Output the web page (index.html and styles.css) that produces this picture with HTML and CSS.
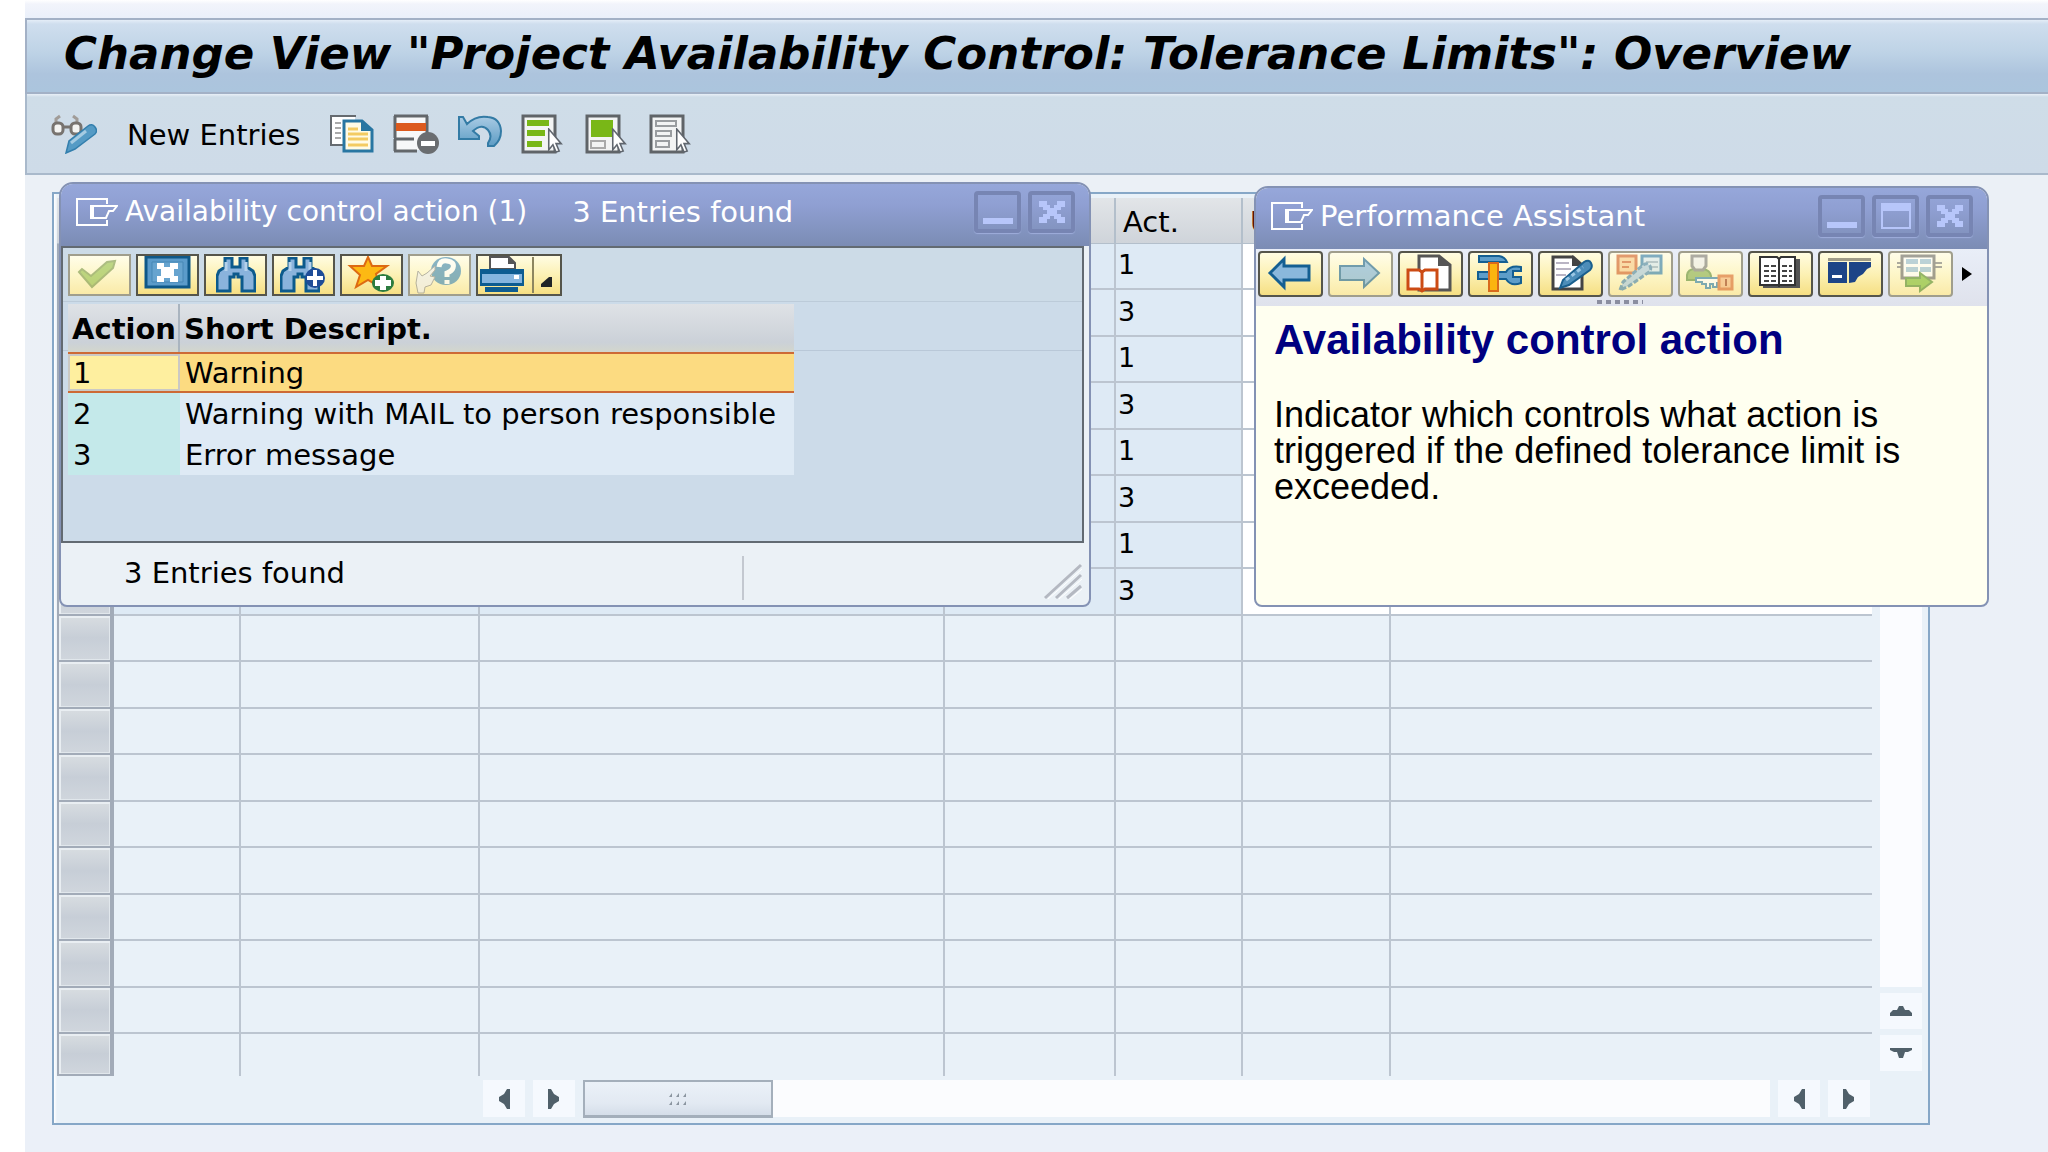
FILE: index.html
```html
<!DOCTYPE html>
<html lang="en">
<head>
<meta charset="utf-8">
<title>Change View: Overview</title>
<link rel="stylesheet" href="styles.css">
</head>
<body>
<svg class="defs" aria-hidden="true">
  <defs>
    <linearGradient id="steel" x1="0" y1="0" x2="0" y2="1"><stop offset="0" stop-color="#a9cbe4"/><stop offset="1" stop-color="#5d9cc4"/></linearGradient>
    <symbol id="menu" viewBox="0 0 42 28"><path d="M31 6V1H1v26h30v-5" fill="none" stroke="#fff" stroke-width="2"/><path d="M15 8h26l-4 5h-4l-3 7H15z" fill="none" stroke="#fff" stroke-width="2"/><path d="M14 7h4v14h-4z" fill="#fff"/></symbol>
    <symbol id="close" viewBox="0 0 28 22"><path d="M1 0h8v4h3v3h4V4h3V0h8v6h-4v3h-4v4h4v3h4v6h-8v-4h-3v-3h-4v3H9v4H1v-6h4v-3h4V9H5V6H1z" fill="#b7c6fa"/></symbol>
    <symbol id="binoculars" viewBox="0 0 40 36"><path d="M9 1h7v9h8V1h7v9l6 4 2 5v15H26V20h-4v-3h-4v3h-4v14H1V19l2-5 6-4z" fill="#8ab3dc" stroke="#0c5a8c" stroke-width="3"/><path d="M10 5v9M30 5v9" stroke="#b5d1ec" stroke-width="3"/></symbol>
    <symbol id="cursor" viewBox="0 0 14 24"><path d="M1 1v20l4-5 3 7 3-1-3-7h5z" fill="#fff" stroke="#60666e" stroke-width="1.5"/></symbol>
  </defs>
</svg>
<div class="page">
  <header class="titlebar"><h1>Change View "Project Availability Control: Tolerance Limits": Overview</h1></header>
  <div class="toolbar">
    <button class="tool tool-first" aria-label="Display / Change"><svg width="46" height="40" viewBox="0 0 46 40"><g fill="#f4f4f2" stroke="#77736f" stroke-width="3"><path d="M5 9V5l4-3M26 9V5l-4-3" fill="none" stroke="#a19c98"/><rect x="2" y="9" width="10" height="11" rx="4"/><rect x="20" y="9" width="10" height="11" rx="4"/><path d="M12 13h8"/></g><path d="M15 39l3-12L37 12q4-3 7 1t0 7L24 35z" fill="#559bc5" stroke="#337fad" stroke-width="1.5"/><path d="M20 29l15-12" stroke="#a5cbe2" stroke-width="3"/></svg></button>
    <button class="text-button">New Entries</button>
    <button class="tool" aria-label="Copy As"><svg width="46" height="40" viewBox="0 0 46 40"><path d="M2 32V2h25M2 31h12" fill="none" stroke="#666b70" stroke-width="2"/><path d="M3 3h23v4H14v23H3z" fill="#fff"/><path d="M6 9h6m-6 5h6m-6 5h6m-6 5h6" stroke="#aaa" stroke-width="2"/><path d="M15 7h18l10 9v21H15z" fill="#fffbe6" stroke="#2876a2" stroke-width="3"/><path d="M32 6v11h12z" fill="#2876a2"/><path d="M19 15h10M19 20h20M19 25h20M19 31h20" stroke="#f3cb62" stroke-width="3"/></svg></button>
    <button class="tool" aria-label="Delete"><svg width="46" height="40" viewBox="0 0 46 40"><path d="M2 2h32v34H2z" fill="#f7f8f9"/><path d="M1 2h34M2 2v22M34 2v22M1 25h20M2 25v12M1 37h23" stroke="#63676b" stroke-width="3" fill="none"/><path d="M3 9h30v8H3z" fill="#dc5a1e"/><circle cx="35" cy="29" r="11" fill="#6a6d70"/><path d="M28 27h14v5H28z" fill="#fff"/></svg></button>
    <button class="tool" aria-label="Undo"><svg width="46" height="40" viewBox="0 0 46 40"><path d="M2 3v22h20v-3l-6-5q9-8 15-1 5 6 0 13v3h6q7-6 7-15Q43 4 31 3 19 1 10 10L6 3z" fill="url(#steel)" stroke="#337ba5" stroke-width="2"/></svg></button>
    <button class="tool" aria-label="Select All"><svg width="46" height="40" viewBox="0 0 46 40"><path d="M2 2h32v36H2z" fill="#f3f4f4" stroke="#606468" stroke-width="3"/><path d="M6 6h22v6H6zM6 16h18v6H6zM6 27h15v6H6z" fill="#79b717"/><use href="#cursor" x="24" y="14" width="20" height="25"/></svg></button>
    <button class="tool" aria-label="Select Block"><svg width="46" height="40" viewBox="0 0 46 40"><path d="M2 2h32v36H2z" fill="#f3f4f4" stroke="#606468" stroke-width="3"/><path d="M6 6h22v17H6z" fill="#79b717"/><path d="M6 27h14v7H6z" fill="none" stroke="#aaa" stroke-width="2"/><use href="#cursor" x="24" y="14" width="20" height="25"/></svg></button>
    <button class="tool" aria-label="Deselect All"><svg width="46" height="40" viewBox="0 0 46 40"><path d="M2 2h32v36H2z" fill="#f3f4f4" stroke="#606468" stroke-width="3"/><path d="M7 7h20v5H7zM7 17h15v5H7zM7 27h13v6H7z" fill="none" stroke="#9a9da0" stroke-width="2"/><use href="#cursor" x="24" y="14" width="20" height="25"/></svg></button>
  </div>

  <main class="workarea">
    <section class="panel">
      <div class="table-row">
        <table class="grid">
          <colgroup><col class="c-sel"><col class="c-1"><col class="c-2"><col class="c-3"><col class="c-4"><col class="c-5"><col class="c-6"><col></colgroup>
          <thead><tr><th></th><th></th><th></th><th></th><th></th><th>Act.</th><th class="usage">U</th><th></th></tr></thead>
          <tbody>
            <tr class="filled"><td></td><td></td><td></td><td></td><td></td><td>1</td><td></td><td></td></tr>
            <tr class="filled"><td></td><td></td><td></td><td></td><td></td><td>3</td><td></td><td></td></tr>
            <tr class="filled"><td></td><td></td><td></td><td></td><td></td><td>1</td><td></td><td></td></tr>
            <tr class="filled"><td></td><td></td><td></td><td></td><td></td><td>3</td><td></td><td></td></tr>
            <tr class="filled"><td></td><td></td><td></td><td></td><td></td><td>1</td><td></td><td></td></tr>
            <tr class="filled"><td></td><td></td><td></td><td></td><td></td><td>3</td><td></td><td></td></tr>
            <tr class="filled"><td></td><td></td><td></td><td></td><td></td><td>1</td><td></td><td></td></tr>
            <tr class="filled"><td></td><td></td><td></td><td></td><td></td><td>3</td><td></td><td></td></tr>
            <tr><td></td><td></td><td></td><td></td><td></td><td></td><td></td><td></td></tr>
            <tr><td></td><td></td><td></td><td></td><td></td><td></td><td></td><td></td></tr>
            <tr><td></td><td></td><td></td><td></td><td></td><td></td><td></td><td></td></tr>
            <tr><td></td><td></td><td></td><td></td><td></td><td></td><td></td><td></td></tr>
            <tr><td></td><td></td><td></td><td></td><td></td><td></td><td></td><td></td></tr>
            <tr><td></td><td></td><td></td><td></td><td></td><td></td><td></td><td></td></tr>
            <tr><td></td><td></td><td></td><td></td><td></td><td></td><td></td><td></td></tr>
            <tr><td></td><td></td><td></td><td></td><td></td><td></td><td></td><td></td></tr>
            <tr><td></td><td></td><td></td><td></td><td></td><td></td><td></td><td></td></tr>
            <tr class="last"><td></td><td></td><td></td><td></td><td></td><td></td><td></td><td></td></tr>
          </tbody>
        </table>
        <div class="vscroll">
          <div class="track"></div>
          <button aria-label="Scroll up"><svg width="24" height="12" viewBox="0 0 24 12"><path d="M1 11V8l3-3h4l2-4h4l2 4h4l3 3v3z" fill="#50606a"/></svg></button>
          <button aria-label="Scroll down"><svg width="24" height="12" viewBox="0 0 24 12"><path d="M1 1h22v2l-4 2h-3l-2 6h-4L8 5H5L1 3z" fill="#50606a"/></svg></button>
        </div>
      </div>
      <div class="hscroll">
        <button aria-label="Scroll left"><svg width="12" height="20" viewBox="0 0 12 20"><path d="M12 0v20h-3l-3-5-5-3V8l5-3 3-5z" fill="#50606a"/></svg></button>
        <button aria-label="Scroll right"><svg width="12" height="20" viewBox="0 0 12 20"><path d="M0 0v20h3l3-5 5-3V8L6 5 3 0z" fill="#50606a"/></svg></button>
        <div class="track"><div class="thumb"><svg width="20" height="14" viewBox="0 0 20 14"><path d="M1 5l3-4v4zM8 5l3-4v4zM15 5l3-4v4zM1 13l3-4v4zM8 13l3-4v4zM15 13l3-4v4z" fill="#8b95a0"/></svg></div></div>
        <button aria-label="Page left"><svg width="12" height="20" viewBox="0 0 12 20"><path d="M12 0v20h-3l-3-5-5-3V8l5-3 3-5z" fill="#50606a"/></svg></button>
        <button aria-label="Page right"><svg width="12" height="20" viewBox="0 0 12 20"><path d="M0 0v20h3l3-5 5-3V8L6 5 3 0z" fill="#50606a"/></svg></button>
      </div>
    </section>

    <section class="window picker" aria-label="Availability control action">
      <header class="window-title">
        <svg width="42" height="28"><use href="#menu"/></svg>
        <h2>Availability control action (1)</h2><span class="hits">3 Entries found</span>
        <button class="winbtn" aria-label="Minimize"><svg width="30" height="24"><path d="M0 18h30v6H0z" fill="#b7c6fa"/></svg></button>
        <button class="winbtn" aria-label="Close"><svg width="28" height="22"><use href="#close"/></svg></button>
      </header>
      <div class="picker-body">
        <div class="picker-tools">
          <button class="ybtn off" aria-label="Continue"><svg width="59" height="38" viewBox="2 2 59 38"><path d="M11 18l3-3 9 7L39 8l8-1-2 7-21 19z" fill="#93bf4c" stroke="#789648" stroke-width="2"/></svg></button>
          <button class="ybtn" aria-label="Cancel"><svg width="59" height="38" viewBox="2 2 59 38"><path d="M10 3h43v30H10z" fill="#5b9bca" stroke="#0e5888" stroke-width="3"/><path d="M16 8h31v20H16z" fill="#67a4cf" stroke="#4687b5"/><path d="M21 9h7v4h6V9h8v6h-4v7h4v6h-8v-4h-6v4h-7v-6h4v-7h-4z" fill="#fff"/></svg></button>
          <button class="ybtn" aria-label="Find"><svg width="59" height="38" viewBox="2 2 59 38"><use href="#binoculars" x="12" y="3" width="40" height="36"/></svg></button>
          <button class="ybtn" aria-label="Find Next"><svg width="59" height="38" viewBox="2 2 59 38"><use href="#binoculars" x="8" y="3" width="40" height="36"/><circle cx="43" cy="24" r="10" fill="#1f4d98"/><path d="M35 24h16M43 16v16" stroke="#fff" stroke-width="4"/></svg></button>
          <button class="ybtn" aria-label="Add to Favorites"><svg width="59" height="38" viewBox="2 2 59 38"><path d="M28 3l4 9h15l-11 8 4 13-12-7-12 7 4-12-10-9h14z" fill="#fdb913" stroke="#dd6a12" stroke-width="2"/><ellipse cx="43" cy="29" rx="11" ry="9" fill="#2c7c3f"/><path d="M35 29h16M43 22v14" stroke="#fff" stroke-width="6"/></svg></button>
          <button class="ybtn off" aria-label="Help"><svg width="59" height="38" viewBox="2 2 59 38"><ellipse cx="38" cy="17" rx="15" ry="14" fill="#3a84b0"/><path d="M31 13q1-7 8-6 8 1 6 7-1 3-6 5v4M39 26v4" fill="none" stroke="#fff" stroke-width="5"/><path d="M10 17l4 5 5-3 8-7v4l-5 6 5 1-4 8-6 2-1 6h-6l-2-10z" fill="#eee" stroke="#888"/></svg></button>
          <button class="ybtn wide" aria-label="Print"><svg width="82" height="38" viewBox="2 2 82 38"><path d="M14 3h19l6 6v6H14z" fill="#fff" stroke="#555" stroke-width="2"/><path d="M32 3v7h8z" fill="#555"/><path d="M4 15h44v17H4z" fill="#0d5c91"/><path d="M6 20h40v9H6z" fill="#85b5df"/><path d="M38 21h5v4h-5z" fill="#fff"/><path d="M9 33h33v5H9z" fill="#0d5c91"/><path d="M57 3v36" stroke="#8d8660" stroke-width="2"/><path d="M65 33v-3l8-7h3v10z" fill="#202428"/></svg></button>
        </div>
        <div class="picker-list">
          <table class="hits-table">
            <thead><tr><th class="key">Action</th><th>Short Descript.</th></tr></thead>
            <tbody>
              <tr class="selected"><td>1</td><td>Warning</td></tr>
              <tr><td>2</td><td>Warning with MAIL to person responsible</td></tr>
              <tr><td>3</td><td>Error message</td></tr>
            </tbody>
          </table>
        </div>
      </div>
      <footer class="status"><span class="status-text">3 Entries found</span><svg width="40" height="38" viewBox="0 0 40 38"><path d="M2 36L38 3M13 36L38 13M24 36L38 24" stroke="#b4b8c1" stroke-width="3" fill="none"/><path d="M5 37L39 7M16 37l23-20M27 37l12-10" stroke="#fff" stroke-width="1" fill="none"/></svg></footer>
    </section>

    <section class="window assistant" aria-label="Performance Assistant">
      <header class="window-title">
        <svg width="42" height="28"><use href="#menu"/></svg>
        <h2>Performance Assistant</h2>
        <button class="winbtn" aria-label="Minimize"><svg width="30" height="24"><path d="M0 18h30v6H0z" fill="#b7c6fa"/></svg></button>
        <button class="winbtn" aria-label="Maximize"><svg width="30" height="26"><path d="M1 1h28v24H1z" fill="none" stroke="#b7c6fa" stroke-width="2"/><path d="M0 0h30v8H0z" fill="#b7c6fa"/></svg></button>
        <button class="winbtn" aria-label="Close"><svg width="28" height="22"><use href="#close"/></svg></button>
      </header>
      <div class="assist-tools">
        <button class="ybtn" aria-label="Back"><svg width="61" height="42" viewBox="2 2 61 42"><path d="M12 22L26 8v7h25v14H26v7z" fill="#8ab8dc" stroke="#145f92" stroke-width="3"/></svg></button>
        <button class="ybtn off" aria-label="Forward"><svg width="61" height="42" viewBox="2 2 61 42"><path d="M51 22L36 8v7H12v14h24v7z" fill="#7ab0de" stroke="#145f92" stroke-width="2"/></svg></button>
        <button class="ybtn" aria-label="Application Help"><svg width="61" height="42" viewBox="2 2 61 42"><path d="M21 5h20l11 9v25H21z" fill="#fff" stroke="#555" stroke-width="3"/><path d="M40 4v11h13z" fill="#555"/><path d="M10 19h11l3 2 3-2h12v19H27l-3 2-3-2H10z" fill="#fff" stroke="#cc4b14" stroke-width="3"/><path d="M24 20v19" stroke="#cc4b14" stroke-width="3"/></svg></button>
        <button class="ybtn" aria-label="Technical Information"><svg width="61" height="42" viewBox="2 2 61 42"><path d="M10 21h28q4-7 15-5v4h-8v6h8v6q-10 4-15-4H10z" fill="#5d9dc9" stroke="#145f92" stroke-width="2"/><path d="M11 5h20q6 1 8 6H11z" fill="#5d9dc9" stroke="#145f92" stroke-width="2"/><path d="M21 12h9v28h-9z" fill="#fbb40f" stroke="#d96a1c" stroke-width="2"/></svg></button>
        <button class="ybtn" aria-label="Edit Documentation"><svg width="61" height="42" viewBox="2 2 61 42"><path d="M15 6h20l9 8v24H15z" fill="#fff" stroke="#444" stroke-width="3"/><path d="M34 4v11h11z" fill="#444"/><path d="M18 12h13M18 18h15M18 24h10" stroke="#b9b4c4" stroke-width="2"/><path d="M22 37l3-8 21-18q5-3 7 1t-1 7L31 34z" fill="#4c8db9" stroke="#195f8e" stroke-width="2"/><path d="M28 29l17-13" stroke="#9bc7e4" stroke-width="3" stroke-dasharray="4 3"/></svg></button>
        <button class="ybtn off" aria-label="Edit Link"><svg width="61" height="42" viewBox="2 2 61 42"><path d="M10 5h18v17H10z" fill="#f8c886" stroke="#cf5a20" stroke-width="3"/><path d="M14 11h9M14 16h7" stroke="#cf5a20" stroke-width="2"/><path d="M34 5h19v17H34z" fill="#d4e6f1" stroke="#2b78a8" stroke-width="3"/><path d="M38 11h12M42 16h8" stroke="#8fa9bb" stroke-width="2"/><path d="M12 39l3-8 20-17q5-3 7 1t-1 6L21 35z" fill="#a5c6e0" stroke="#4280aa" stroke-width="3" stroke-dasharray="5 2"/></svg></button>
        <button class="ybtn off" aria-label="Customer Authorization"><svg width="61" height="42" viewBox="2 2 61 42"><path d="M9 29v-5q1-6 8-6h8q7 1 8 7v4z" fill="#84ad51" stroke="#5c8c38" stroke-width="2"/><path d="M14 5h14v10l-3 4h-8l-3-4z" fill="#eee" stroke="#777" stroke-width="3"/><path d="M18 27h24v5h-3v4h-4v-3h-3v4h-4v-4h-4v-2h-6z" fill="#fff" stroke="#2b7cab" stroke-width="2"/><path d="M41 25h13v13H41z" fill="#f5b47c" stroke="#d9682d" stroke-width="3"/><path d="M48 28v7" stroke="#9b3813" stroke-width="2"/></svg></button>
        <button class="ybtn" aria-label="Glossary"><svg width="61" height="42" viewBox="2 2 61 42"><path d="M15 8h37v29H15z" fill="#555"/><path d="M12 6h17l2 2 2-2h14v28H12z" fill="#fff" stroke="#333" stroke-width="2"/><path d="M31 7v29" stroke="#333" stroke-width="2"/><path d="M16 15h12M16 20h12M16 25h12M16 30h12M34 15h10M34 20h10M34 25h10M34 30h10" stroke="#444" stroke-width="2" stroke-dasharray="5 2"/></svg></button>
        <button class="ybtn" aria-label="SAP Notes"><svg width="61" height="42" viewBox="2 2 61 42"><path d="M10 7h43v3H10z" fill="#9f9b87"/><path d="M10 11h19v21H10zM31 11h22v5l-4 2-4 5-5 3-3 5-6 1z" fill="#1d4487"/><path d="M14 24h10v3H14z" fill="#fff"/></svg></button>
        <button class="ybtn off" aria-label="Export"><svg width="61" height="42" viewBox="2 2 61 42"><path d="M9 12h45M9 16h45" stroke="#777" stroke-width="2"/><path d="M14 5h32v22H14z" fill="#fff" stroke="#666" stroke-width="3"/><path d="M18 8h12v5H18zM32 8h11v5H32zM18 16h12v5H18zM32 16h11v5H32z" fill="#8fb8d4"/><path d="M18 27h14v-5l12 9-12 9v-5H18z" fill="#7abb30" stroke="#508a2c" stroke-width="2"/></svg></button>
        <button class="more" aria-label="More functions"><svg width="10" height="14"><path d="M0 0l10 7-10 7z" fill="#000"/></svg></button>
        <svg class="handle" width="46" height="4"><path d="M0 2h46" stroke="#8b8ea0" stroke-width="4" stroke-dasharray="5 4"/></svg>
      </div>
      <article class="help">
        <h3>Availability control action</h3>
        <p>Indicator which controls what action is triggered if the defined tolerance limit is exceeded.</p>
      </article>
    </section>
  </main>
</div>
</body>
</html>
```
FILE: styles.css
```css
* { box-sizing: border-box; }
body {
  margin: 0;
  background: #fff;
  color: #000;
  font: 29px/40px "DejaVu Sans", sans-serif;
}
h1, h2, h3, p { margin: 0; font-weight: normal; }
button { margin: 0; padding: 0; border: 0; background: none; color: inherit; font: inherit; }
svg { display: block; flex: none; }
.defs { position: absolute; width: 0; height: 0; }

.page {
  display: flex;
  flex-direction: column;
  min-height: 100vh;
  margin-left: 25px;
  padding-top: 18px;
  background: linear-gradient(#fff 0, #f2f4fb 4px, #eaf0fa 18px, #ebf0f6 180px, #ebf0f8 100%);
}
.titlebar {
  height: 76px;
  padding: 9px 0 0 37px;
  border: 2px solid #a3b1c6;
  border-width: 2px 0 2px 2px;
  background: linear-gradient(#e4edf7 0, #cfdeee 4px, #bed3e6 45%, #adc4dd 75%, #abc5dd);
}
.titlebar h1 {
  font-size: 45px;
  line-height: 50px;
  font-weight: bold;
  font-style: oblique;
  white-space: nowrap;
}
.toolbar {
  display: flex;
  align-items: center;
  height: 81px;
  padding-left: 24px;
  border: solid #a9b9cb;
  border-width: 0 0 2px 2px;
  background: linear-gradient(#e9f0f7 0, #cfdde8 3px, #cedbe8);
}
.tool { width: 46px; height: 40px; margin-right: 18px; }
.tool-first { margin-right: 30px; }
.text-button { margin-right: 29px; padding-top: 2px; white-space: nowrap; }

.workarea { position: relative; flex: 1; padding: 17px 118px 26px 27px; }
.panel {
  padding: 4px 0 6px 3px;
  border: 2px solid #86a7c7;
  background: linear-gradient(90deg, #fff 0, #e9f1f8 3px);
}
.table-row { display: flex; gap: 8px; padding-right: 6px; }
.grid { flex: 1; min-width: 0; table-layout: fixed; border-collapse: separate; border-spacing: 0; line-height: 32px; }
.c-sel { width: 57px; }
.c-1 { width: 127px; }
.c-2 { width: 239px; }
.c-3 { width: 465px; }
.c-4 { width: 171px; }
.c-5 { width: 127px; }
.c-6 { width: 148px; }
.grid th {
  height: 46px;
  padding: 3px 0 0 7px;
  border: solid #b3bfcb;
  border-width: 0 2px 1px 0;
  background: linear-gradient(#e2e5e8, #cfd4da);
  text-align: left;
  font-weight: normal;
}
.grid .usage { color: #5c1408; }
.grid td { height: 46px; padding: 0 0 2px 2px; border: solid #bcc5d0; border-width: 0 2px 2px 0; font-size: 27px; }
.grid tr:nth-child(even) td { height: 47px; }
.grid tbody td:last-child, .grid th:last-child { border-right: 0; }
.grid .filled td { background: #deeaf5; }
.grid .filled td:nth-child(n+7) { background: #fff; }
.grid td:first-child, .grid .filled td:first-child {
  border: 2px solid #a2abb8;
  border-width: 0 4px 2px 2px;
  background: linear-gradient(#d8dde1, #c7ced7 50%, #d0d6dd);
  box-shadow: inset 2px 2px #e9eef2, inset -1px -1px #e1e7ec;
}
.grid tr.last td { height: 42px; border-bottom-width: 0; }
.grid tr.last td:first-child { border-bottom-width: 2px; }

.vscroll { display: flex; flex-direction: column; gap: 6px; width: 42px; padding-bottom: 5px; }
.vscroll .track { flex: 1; background: #fbfcff; }
.vscroll button, .hscroll button { display: grid; place-items: center; flex: none; width: 42px; height: 36px; background: #f5f9fe; }
.hscroll { display: flex; gap: 8px; height: 37px; margin: 4px 58px 0 426px; }
.hscroll button { height: 37px; }
.hscroll .track { flex: 1; background: #fbfcfe; }
.thumb {
  display: grid;
  place-items: center;
  width: 190px;
  height: 38px;
  border: 2px solid #a4afbb;
  border-bottom-width: 3px;
  background: linear-gradient(#ebf1f8, #e2e9f2 65%, #d5dee9);
}

.window {
  position: absolute;
  display: flex;
  flex-direction: column;
  border: 2px solid #8492b4;
  border-radius: 14px 14px 8px 8px;
  overflow: hidden;
}
.window-title {
  display: flex;
  align-items: center;
  flex: none;
  height: 62px;
  padding: 0 14px 6px 15px;
  gap: 7px;
  background: linear-gradient(#96a7da, #8f9fd2 35%, #7b8cb4);
  color: #fff;
}
.window-title h2 { font-size: 29px; white-space: nowrap; margin-right: auto; }
.winbtn {
  display: grid;
  place-items: center;
  flex: none;
  width: 47px;
  height: 42px;
  border: 4px solid #7785b3;
  border-radius: 4px;
  box-shadow: 0 1px 1px #9eaddb;
}

.ybtn {
  flex: none;
  border: 2px solid #55554b;
  background: linear-gradient(#fffce2, #fcf1b4 50%, #f6df83);
}
.ybtn.off { border-color: #a09e8c; background: linear-gradient(#fffde9, #fdf6c8 50%, #faeaa8); }
.ybtn.off svg { opacity: .6; }

.picker { left: 34px; top: 7px; width: 1032px; height: 425px; background: #ebf1f6; }
.picker .window-title h2 { margin-right: 38px; font-size: 28px; }
.hits { margin-right: auto; white-space: nowrap; }
.picker-body {
  flex: 1;
  margin-right: 5px;
  border: 2px solid #626a72;
  background: #ccdbe9;
}
.picker-tools { display: flex; gap: 5px; height: 54px; padding: 6px 0 0 5px; background: #ccdbe7; border-bottom: 1px solid #bccbd9; }
.picker-tools .ybtn { width: 63px; height: 42px; }
.picker-tools .wide { width: 86px; }
.picker-list { padding: 2px 0 0 5px; background: linear-gradient(#ccdbe9 48px, #b9c8d8 48px, #b9c8d8 49px, #ccdbe9 49px); }
.hits-table { border-collapse: separate; border-spacing: 0; table-layout: fixed; width: 726px; }
.hits-table th {
  height: 48px;
  padding: 2px 0 0 4px;
  background: linear-gradient(#dfe2e6, #cbd1d8 80%, #d3d6cc);
  text-align: left;
  font-size: 29px;
  white-space: nowrap;
}
.hits-table .key { width: 112px; border-right: 2px solid #a9b4bf; }
.hits-table td { height: 41px; padding: 0 0 0 5px; background: #deeaf5; line-height: 36px; white-space: nowrap; }
.hits-table td:first-child { background: #c4e9ea; }
.hits-table .selected td { background: #fcdb81; border: solid #cd6a35; border-width: 2px 0 2px; }
.hits-table .selected td:first-child { background: #feef9f; box-shadow: inset 2px 2px #cbc9c4, inset -2px -2px #cbc9c4; }
.status { display: flex; justify-content: space-between; align-items: flex-end; flex: none; height: 62px; padding: 0 6px 5px 63px; }
.status-text {
  width: 620px;
  height: 44px;
  line-height: 34px;
  border-right: 2px solid #c3c8d0;
}

.assistant { left: 1229px; top: 11px; width: 735px; height: 421px; background: #fffff0; }
.assistant .window-title { height: 61px; }
.assist-tools { position: relative; display: flex; align-items: flex-start; gap: 5px; flex: none; height: 57px; padding: 2px 12px 0 2px; background: linear-gradient(#e9eef8, #dfe2ec); }
.assist-tools .ybtn { width: 65px; height: 46px; border-radius: 4px; }
.more { display: grid; place-items: center; width: 32px; height: 46px; }
.handle { position: absolute; left: 341px; bottom: 2px; }
.help { padding: 10px 60px 0 18px; font-family: "Liberation Sans", Arial, sans-serif; }
.help h3 { color: #000080; font-size: 42px; line-height: 48px; font-weight: bold; }
.help p { margin-top: 33px; font-size: 36px; line-height: 36px; }
```
